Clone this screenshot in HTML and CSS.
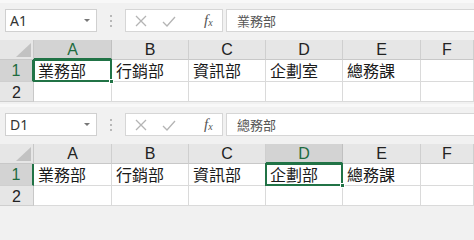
FILE: index.html
```html
<!DOCTYPE html>
<html lang="zh-Hant">
<head>
<meta charset="utf-8">
<title>Excel</title>
<link rel="stylesheet" href="styles.css">
</head>
<body>
<div class="panel">
  <div class="fbar">
    <div class="namebox"><span class="ref">A1</span><span class="caret"></span></div>
    <div class="grip"><i></i><i></i><i></i></div>
    <div class="btns">
      <svg class="ico" width="14" height="14" viewBox="0 0 14 14"><path d="M2 2 L12 12 M12 2 L2 12" stroke="#b4b4b4" stroke-width="1.3" fill="none"/></svg>
      <svg class="ico" width="16" height="14" viewBox="0 0 16 14"><path d="M2 8 L6 12 L14 3" stroke="#b4b4b4" stroke-width="1.3" fill="none"/></svg>
      <span class="fx">f<sub>x</sub></span>
    </div>
    <div class="finput">業務部</div>
  </div>
  <div class="sheet">
    <div class="corner"><span class="tri"></span></div>
    <div class="ch selc">A</div><div class="ch">B</div><div class="ch">C</div><div class="ch">D</div><div class="ch">E</div><div class="ch">F</div>
    <div class="rh selr">1</div>
    <div class="cell active">業務部<span class="handle"></span></div><div class="cell">行銷部</div><div class="cell">資訊部</div><div class="cell">企劃室</div><div class="cell">總務課</div><div class="cell"></div>
    <div class="rh">2</div>
    <div class="cell"></div><div class="cell"></div><div class="cell"></div><div class="cell"></div><div class="cell"></div><div class="cell"></div>
  </div>
</div>
<div class="panel">
  <div class="fbar">
    <div class="namebox"><span class="ref">D1</span><span class="caret"></span></div>
    <div class="grip"><i></i><i></i><i></i></div>
    <div class="btns">
      <svg class="ico" width="14" height="14" viewBox="0 0 14 14"><path d="M2 2 L12 12 M12 2 L2 12" stroke="#b4b4b4" stroke-width="1.3" fill="none"/></svg>
      <svg class="ico" width="16" height="14" viewBox="0 0 16 14"><path d="M2 8 L6 12 L14 3" stroke="#b4b4b4" stroke-width="1.3" fill="none"/></svg>
      <span class="fx">f<sub>x</sub></span>
    </div>
    <div class="finput">總務部</div>
  </div>
  <div class="sheet">
    <div class="corner"><span class="tri"></span></div>
    <div class="ch">A</div><div class="ch">B</div><div class="ch">C</div><div class="ch selc">D</div><div class="ch">E</div><div class="ch">F</div>
    <div class="rh selr">1</div>
    <div class="cell">業務部</div><div class="cell">行銷部</div><div class="cell">資訊部</div><div class="cell active">企劃部<span class="handle"></span></div><div class="cell">總務課</div><div class="cell"></div>
    <div class="rh">2</div>
    <div class="cell"></div><div class="cell"></div><div class="cell"></div><div class="cell"></div><div class="cell"></div><div class="cell"></div>
  </div>
</div>
</body>
</html>
```
FILE: styles.css
```css
* { box-sizing: border-box; }
html, body { margin: 0; padding: 0; }
body {
  width: 474px;
  height: 209px;
  overflow: hidden;
  background: #f1f1f1;
  font-family: "Noto Sans", "Noto Sans CJK TC", sans-serif;
}
.panel {
  height: 104px;
  overflow: hidden;
  background: #f1f1f1;
  border-top: 3px solid #f8f8f8;
  padding-top: 6px;
}
.fbar {
  display: flex;
  align-items: stretch;
  height: 23px;
  padding-left: 5px;
  margin-bottom: 8px;
}
.namebox {
  width: 92px;
  background: #fff;
  border: 1px solid #d0d0d0;
  display: flex;
  align-items: center;
  justify-content: space-between;
  padding: 0 6px 0 4px;
}
.ref {
  font-family: "Noto Sans", sans-serif;
  font-size: 14px;
  color: #333;
  line-height: 1;
}
.caret {
  width: 0;
  height: 0;
  border-left: 3px solid transparent;
  border-right: 3px solid transparent;
  border-top: 3px solid #777;
}
.grip {
  width: 28px;
  display: flex;
  flex-direction: column;
  align-items: center;
  justify-content: center;
  gap: 3px;
}
.grip i {
  display: block;
  width: 2px;
  height: 2px;
  background: #b8b8b8;
}
.btns {
  width: 98px;
  background: #fff;
  border: 1px solid #d6d6d6;
  display: flex;
  align-items: center;
  padding-left: 8px;
  gap: 13px;
}
.fx {
  margin-left: 14px;
  font-family: "Liberation Serif", serif;
  font-style: italic;
  font-size: 15px;
  color: #555;
  line-height: 1;
}
.fx sub { font-size: 10px; vertical-align: -1px; }
.finput {
  flex: 1;
  margin-left: 3px;
  background: #fff;
  border: 1px solid #d6d6d6;
  border-right: none;
  font-family: "Noto Sans CJK TC", sans-serif;
  font-size: 13px;
  color: #555;
  padding-left: 10px;
  line-height: 21px;
}
.sheet {
  display: grid;
  grid-template-columns: 34px 78px 77px 77px 77px 78px 1fr;
  grid-template-rows: 20px 22px 20px;
}
.corner {
  background: #e6e6e6;
  border-right: 1px solid #c8c8c8;
  border-bottom: 1px solid #c8c8c8;
  position: relative;
}
.tri {
  position: absolute;
  right: 2px;
  bottom: 2px;
  width: 0;
  height: 0;
  border-left: 15px solid transparent;
  border-bottom: 14px solid #c2c2c2;
}
.ch {
  background: #e6e6e6;
  border-right: 1px solid #cfcfcf;
  border-bottom: 1px solid #c8c8c8;
  text-align: center;
  font-family: "Liberation Sans", sans-serif;
  font-size: 16px;
  line-height: 20px;
  color: #222;
}
.ch.selc {
  background: #d3d3d3;
  color: #1e6b3f;
  border-bottom: 2px solid #217346;
  border-right-color: #c0c0c0;
}
.rh {
  background: #e6e6e6;
  border-right: 1px solid #c8c8c8;
  border-bottom: 1px solid #cfcfcf;
  text-align: center;
  font-family: "Liberation Sans", sans-serif;
  font-size: 16px;
  line-height: 21px;
  color: #222;
}
.rh.selr {
  background: #d3d3d3;
  color: #1e6b3f;
  border-right: 2px solid #217346;
}
.cell {
  background: #fff;
  border-right: 1px solid #dadada;
  border-bottom: 1px solid #dadada;
  font-family: "Noto Sans CJK TC", sans-serif;
  font-size: 16px;
  line-height: 21px;
  color: #1a1a1a;
  padding-left: 4px;
  white-space: nowrap;
  position: relative;
}
.cell.active::after {
  content: "";
  position: absolute;
  left: -1px;
  top: -1px;
  right: -1px;
  bottom: -1px;
  border: 2px solid #217346;
}
.handle {
  position: absolute;
  right: -3px;
  bottom: -3px;
  width: 5px;
  height: 5px;
  background: #217346;
  border: 1px solid #fff;
  z-index: 2;
}
```
